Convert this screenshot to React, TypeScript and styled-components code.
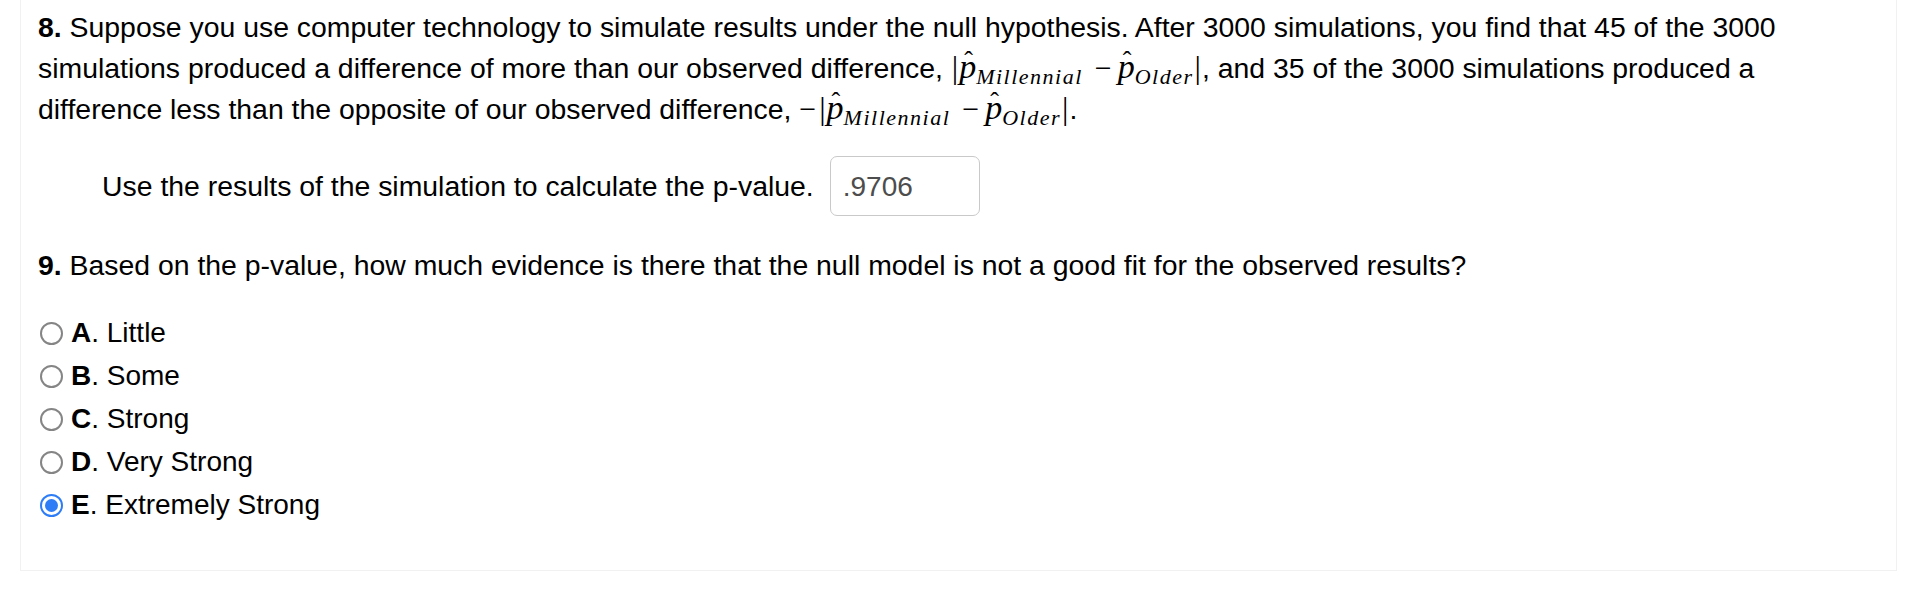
import React, { useState } from 'react';
import styled, { createGlobalStyle } from 'styled-components';

const GlobalStyle = createGlobalStyle`
  html, body {
    margin: 0;
    padding: 0;
    background: #ffffff;
  }
  body {
    font-family: "Liberation Sans", Arial, Helvetica, sans-serif;
    color: #000000;
  }
`;

const Panel = styled.div`
  margin-left: 20px;
  width: 1877px;
  height: 571px;
  box-sizing: border-box;
  border: 1px solid #f1f1f1;
  border-top: none;
  padding: 7px 40px 0 17px;
`;

const Question = styled.p`
  margin: 0;
  font-size: 28.4px;
  line-height: 41px;
`;

const Num = styled.b`
  font-weight: 700;
`;

const AnswerRow = styled.div`
  display: flex;
  align-items: center;
  gap: 16px;
  margin: 26px 0 0 64px;
  font-size: 28.4px;
`;

const AnswerBox = styled.input`
  width: 150px;
  height: 60px;
  box-sizing: border-box;
  border: 1px solid #c9c9c9;
  border-radius: 7px;
  padding: 2px 0 0 12px;
  font-family: "Liberation Sans", Arial, sans-serif;
  font-size: 28px;
  color: #4d4d4d;
  outline: none;
  background: #ffffff;
`;

const SecondQuestion = styled(Question)`
  margin-top: 29px;
`;

const Options = styled.div`
  display: flex;
  flex-direction: column;
  gap: 13px;
  margin-top: 32px;
`;

const Option = styled.label`
  display: flex;
  align-items: center;
  gap: 8px;
  height: 30px;
  font-size: 28px;
  cursor: pointer;
`;

const Radio = styled.span<{ $checked: boolean }>`
  width: 23px;
  height: 23px;
  box-sizing: border-box;
  border-radius: 50%;
  border: 2px solid ${(p) => (p.$checked ? '#2f7df6' : '#858585')};
  display: flex;
  align-items: center;
  justify-content: center;
  flex-shrink: 0;
  margin-left: 2px;

  &::after {
    content: '';
    width: 13px;
    height: 13px;
    border-radius: 50%;
    background: ${(p) => (p.$checked ? '#2f7df6' : 'transparent')};
  }
`;

const Math = styled.span`
  font-family: "Liberation Serif", "Times New Roman", serif;
  white-space: nowrap;
  line-height: 1;
`;

const Bar = styled.span`
  font-size: 32px;
  line-height: 1;
  margin: 0 1px;
`;

const PHat = styled.span`
  position: relative;
  display: inline-block;
  font-size: 34px;
  line-height: 1;
  font-style: italic;

  &::before {
    content: 'ˆ';
    position: absolute;
    left: 5px;
    top: -2px;
    font-style: normal;
    font-size: 26px;
    line-height: 1;
  }
`;

const Sub = styled.sub`
  font-size: 22px;
  font-style: italic;
  letter-spacing: 1.5px;
  vertical-align: -6px;
  line-height: 0;
`;

const Minus = styled.span<{ $lead?: boolean }>`
  font-size: 30px;
  line-height: 1;
  margin: ${(p) => (p.$lead ? '0 2px 0 0' : '0 6px 0 12px')};
`;

const Diff = ({ neg }: { neg?: boolean }) => (
  <Math>
    {neg && <Minus $lead>−</Minus>}
    <Bar>|</Bar>
    <PHat>p</PHat>
    <Sub>Millennial</Sub>
    <Minus>−</Minus>
    <PHat>p</PHat>
    <Sub>Older</Sub>
    <Bar>|</Bar>
  </Math>
);

const choices = [
  { key: 'A', text: 'Little' },
  { key: 'B', text: 'Some' },
  { key: 'C', text: 'Strong' },
  { key: 'D', text: 'Very Strong' },
  { key: 'E', text: 'Extremely Strong' },
];

const App: React.FC = () => {
  const [pValue, setPValue] = useState('.9706');
  const [picked, setPicked] = useState('E');

  return (
    <>
      <GlobalStyle />
      <Panel>
        <Question>
          <Num>8.</Num> Suppose you use computer technology to simulate results under the null
          hypothesis. After 3000 simulations, you find that 45 of the 3000 simulations produced a
          difference of more than our observed difference, <Diff />, and 35 of the 3000
          simulations produced a difference less than the opposite of our observed difference,{' '}
          <Diff neg />.
        </Question>

        <AnswerRow>
          <span>Use the results of the simulation to calculate the p-value.</span>
          <AnswerBox value={pValue} onChange={(e) => setPValue(e.target.value)} />
        </AnswerRow>

        <SecondQuestion>
          <Num>9.</Num> Based on the p-value, how much evidence is there that the null model is
          not a good fit for the observed results?
        </SecondQuestion>

        <Options>
          {choices.map((c) => (
            <Option key={c.key} onClick={() => setPicked(c.key)}>
              <Radio $checked={picked === c.key} />
              <span>
                <Num>{c.key}</Num>. {c.text}
              </span>
            </Option>
          ))}
        </Options>
      </Panel>
    </>
  );
};

export default App;
